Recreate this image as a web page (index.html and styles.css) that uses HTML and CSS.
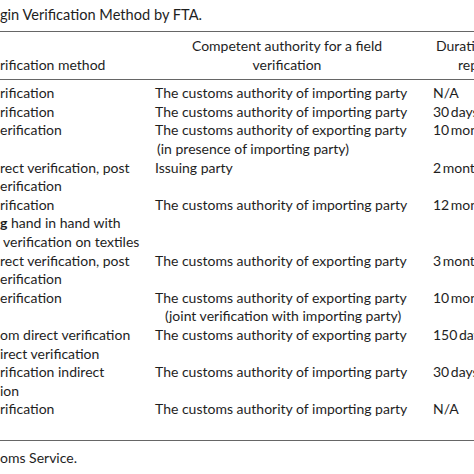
FILE: index.html
```html
<!DOCTYPE html>
<html>
<head>
<meta charset="utf-8">
<link rel="stylesheet" href="styles.css">
</head>
<body>
<div class="page">
  <div class="caption">gin Verification Method by FTA.</div>
  <div class="table">
    <div class="row head">
      <div class="c1 bottom">rification method</div>
      <div class="c2 center">Competent authority for a field<br>verification</div>
      <div class="c3"><div class="h3a">Duration of the</div><div class="h3b">reply</div></div>
    </div>
    <div class="body">
      <div class="row">
        <div class="c1">rification</div>
        <div class="c2">The customs authority of importing party</div>
        <div class="c3">N/A</div>
      </div>
      <div class="row">
        <div class="c1">rification</div>
        <div class="c2">The customs authority of importing party</div>
        <div class="c3">30 days</div>
      </div>
      <div class="row">
        <div class="c1">erification</div>
        <div class="c2">The customs authority of exporting party<div class="sub">(in presence of importing party)</div></div>
        <div class="c3">10 months</div>
      </div>
      <div class="row">
        <div class="c1">rect verification, post<br>erification</div>
        <div class="c2">Issuing party</div>
        <div class="c3">2 months</div>
      </div>
      <div class="row">
        <div class="c1">rification<br><b>g</b> hand in hand with<div class="ind">verification on textiles</div></div>
        <div class="c2">The customs authority of importing party</div>
        <div class="c3">12 months</div>
      </div>
      <div class="row">
        <div class="c1">rect verification, post<br>erification</div>
        <div class="c2">The customs authority of exporting party</div>
        <div class="c3">3 months</div>
      </div>
      <div class="row">
        <div class="c1">erification</div>
        <div class="c2">The customs authority of exporting party<div class="sub wide">(joint verification with importing party)</div></div>
        <div class="c3">10 months</div>
      </div>
      <div class="row">
        <div class="c1">om direct verification<br>irect verification</div>
        <div class="c2">The customs authority of exporting party</div>
        <div class="c3">150 days</div>
      </div>
      <div class="row">
        <div class="c1">rification indirect<br>ion</div>
        <div class="c2">The customs authority of importing party</div>
        <div class="c3">30 days</div>
      </div>
      <div class="row">
        <div class="c1">rification</div>
        <div class="c2">The customs authority of importing party</div>
        <div class="c3">N/A</div>
      </div>
    </div>
  </div>
  <div class="note">oms Service.</div>
</div>
</body>
</html>
```
FILE: styles.css
```css
html, body {
  margin: 0;
  padding: 0;
  background: #fff;
}
body {
  width: 474px;
  height: 474px;
  overflow: hidden;
  font-family: "Lato", "Liberation Sans", sans-serif;
  font-size: 14px;
  line-height: 18.6px;
  color: #1e1e1e;
}
.page {
  width: 474px;
}
.caption {
  height: 31px;
  padding-top: 6px;
  box-sizing: border-box;
  font-size: 14.6px;
  white-space: nowrap;
}
.table {
  border-top: 1.5px solid #666;
  border-bottom: 1.5px solid #666;
}
.row {
  display: grid;
  grid-template-columns: 155px 278px 1fr;
  white-space: nowrap;
}
.c3 {
  word-spacing: -2px;
}
.head {
  padding: 5px 0 5px;
  border-bottom: 1.5px solid #666;
}
.head .c3 {
  word-spacing: 0;
}
.body {
  padding: 4px 0 21px;
}
.bottom {
  align-self: end;
}
.center {
  text-align: center;
  padding-right: 14px;
}
.h3a {
  padding-left: 3px;
}
.h3b {
  padding-left: 25px;
}
.sub {
  padding-left: 2px;
}
.sub.wide {
  padding-left: 10px;
}
.ind {
  padding-left: 3px;
}
.note {
  padding-top: 8px;
  white-space: nowrap;
}
```
